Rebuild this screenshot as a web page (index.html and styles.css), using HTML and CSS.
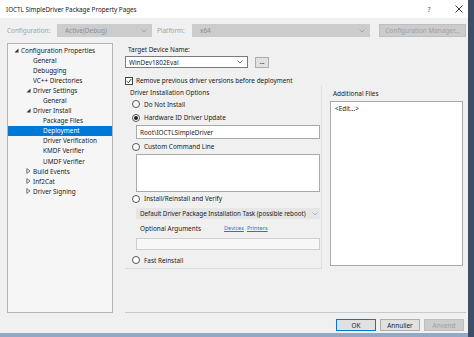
FILE: index.html
```html
<!DOCTYPE html>
<html>
<head>
<meta charset="utf-8">
<title>IOCTL SimpleDriver Package Property Pages</title>
<link rel="stylesheet" href="styles.css">
</head>
<body>
<div class="window">
  <div class="titlebar">
    <span class="title">IOCTL SimpleDriver Package Property Pages</span>
    <span class="help">?</span>
    <span class="close">
      <svg width="8" height="8" viewBox="0 0 8 8"><path d="M0.5 0.5 L7.5 7.5 M7.5 0.5 L0.5 7.5" stroke="#222" stroke-width="0.9"/></svg>
    </span>
  </div>

  <div class="config-row">
    <span class="lbl-off lbl-config">Configuration:</span>
    <div class="combo combo-off combo-config">
      <span class="combo-text">Active(Debug)</span>
      <svg class="chev" width="6" height="4" viewBox="0 0 6 4"><path d="M0.5 0.5 L3 3 L5.5 0.5" fill="none" stroke="#9a9a9a" stroke-width="0.8"/></svg>
    </div>
    <span class="lbl-off lbl-platform">Platform:</span>
    <div class="combo combo-off combo-platform">
      <span class="combo-text">x64</span>
      <svg class="chev" width="6" height="4" viewBox="0 0 6 4"><path d="M0.5 0.5 L3 3 L5.5 0.5" fill="none" stroke="#9a9a9a" stroke-width="0.8"/></svg>
    </div>
    <div class="btn btn-off btn-cfgmgr">Configuration Manager...</div>
  </div>

  <div class="main">
    <div class="tree">
      <div class="node lvl0"><span class="tw"><svg width="5" height="5" viewBox="0 0 5 5"><polygon points="4.5,0.5 4.5,4.5 0.5,4.5" fill="#333"/></svg></span>Configuration Properties</div>
      <div class="node lvl1"><span class="tw"></span>General</div>
      <div class="node lvl1"><span class="tw"></span>Debugging</div>
      <div class="node lvl1"><span class="tw"></span>VC++ Directories</div>
      <div class="node lvl1"><span class="tw"><svg width="5" height="5" viewBox="0 0 5 5"><polygon points="4.5,0.5 4.5,4.5 0.5,4.5" fill="#333"/></svg></span>Driver Settings</div>
      <div class="node lvl2"><span class="tw"></span>General</div>
      <div class="node lvl1"><span class="tw"><svg width="5" height="5" viewBox="0 0 5 5"><polygon points="4.5,0.5 4.5,4.5 0.5,4.5" fill="#333"/></svg></span>Driver Install</div>
      <div class="node lvl2"><span class="tw"></span>Package Files</div>
      <div class="node lvl2 selected"><span class="tw"></span>Deployment</div>
      <div class="node lvl2"><span class="tw"></span>Driver Verification</div>
      <div class="node lvl2"><span class="tw"></span>KMDF Verifier</div>
      <div class="node lvl2"><span class="tw"></span>UMDF Verifier</div>
      <div class="node lvl1"><span class="tw"><svg width="5" height="6" viewBox="0 0 5 6"><polygon points="0.8,0.6 4,3 0.8,5.4" fill="none" stroke="#555" stroke-width="0.8"/></svg></span>Build Events</div>
      <div class="node lvl1"><span class="tw"><svg width="5" height="6" viewBox="0 0 5 6"><polygon points="0.8,0.6 4,3 0.8,5.4" fill="none" stroke="#555" stroke-width="0.8"/></svg></span>Inf2Cat</div>
      <div class="node lvl1"><span class="tw"><svg width="5" height="6" viewBox="0 0 5 6"><polygon points="0.8,0.6 4,3 0.8,5.4" fill="none" stroke="#555" stroke-width="0.8"/></svg></span>Driver Signing</div>
    </div>

    <div class="page">
      <div class="field-label">Target Device Name:</div>
      <div class="device-row">
        <div class="combo combo-device">
          <span class="combo-text">WinDev1802Eval</span>
          <svg class="chev" width="6" height="4" viewBox="0 0 6 4"><path d="M0.5 0.5 L3 3 L5.5 0.5" fill="none" stroke="#555" stroke-width="0.8"/></svg>
        </div>
        <div class="btn btn-dots">...</div>
      </div>
      <div class="check-row">
        <span class="checkbox">
          <svg width="6" height="6" viewBox="0 0 6 6"><path d="M0.8 3.2 L2.4 4.8 L5.3 1" fill="none" stroke="#222" stroke-width="0.9"/></svg>
        </span>
        <span>Remove previous driver versions before deployment</span>
      </div>

      <div class="columns">
        <div class="options">
          <div class="group-title">Driver Installation Options</div>
          <div class="radio-row r1"><span class="radio"></span>Do Not Install</div>
          <div class="radio-row r2"><span class="radio on"></span>Hardware ID Driver Update</div>
          <div class="textbox tb-hwid">Root\IOCTLSimpleDriver</div>
          <div class="radio-row r3"><span class="radio"></span>Custom Command Line</div>
          <div class="textbox tb-cmd"></div>
          <div class="radio-row r4"><span class="radio"></span>Install/Reinstall and Verify</div>
          <div class="combo combo-flat">
            <span class="combo-text">Default Driver Package Installation Task (possible reboot)</span>
            <svg class="chev" width="6" height="4" viewBox="0 0 6 4"><path d="M0.5 0.5 L3 3 L5.5 0.5" fill="none" stroke="#aaa" stroke-width="0.8"/></svg>
          </div>
          <div class="args-row">
            <span class="args-label">Optional Arguments</span>
            <span class="link">Devices</span>
            <span class="link">Printers</span>
          </div>
          <div class="textbox tb-args"></div>
          <div class="radio-row r5"><span class="radio"></span>Fast Reinstall</div>
        </div>

        <div class="files">
          <div class="files-title">Additional Files</div>
          <div class="files-box">&lt;Edit...&gt;</div>
        </div>
      </div>
    </div>
  </div>

  <div class="footer">
    <div class="btn btn-default">OK</div>
    <div class="btn">Annuller</div>
    <div class="btn btn-off">Anvend</div>
  </div>
</div>
</body>
</html>
```

FILE: styles.css
```css
* {
  box-sizing: border-box;
}
html, body {
  margin: 0;
}
body {
  width: 474px;
  height: 337px;
  overflow: hidden;
  background: linear-gradient(to right, #93a8c4 468px, #3d4e68 468px);
  font: 6.4px "Noto Sans", "Open Sans", sans-serif;
  color: #1a1a1a;
}
.window {
  width: 468px;
  height: 333px;
  background: #f0f0f0;
  display: flex;
  flex-direction: column;
}

/* title bar */
.titlebar {
  height: 18px;
  background: #ffffff;
  display: flex;
  align-items: center;
  padding-left: 6px;
  font-size: 6.3px;
}
.title {
  flex: 1;
}
.help {
  width: 10px;
  text-align: center;
  margin-right: 21px;
  color: #333;
}
.close {
  width: 8px;
  height: 8px;
  display: flex;
  margin-right: 5px;
}

/* configuration row */
.config-row {
  display: flex;
  align-items: center;
  height: 13px;
  margin-top: 6px;
}
.lbl-off {
  color: #a2a2a2;
}
.lbl-config {
  margin-left: 7px;
  width: 50px;
}
.lbl-platform {
  margin-left: 5px;
  width: 35px;
}
.combo {
  display: flex;
  align-items: center;
  height: 13px;
  border: 1px solid #7a7a7a;
  background: #ffffff;
  padding: 0 4px;
}
.combo-text {
  flex: 1;
  white-space: nowrap;
  overflow: hidden;
}
.combo-off {
  background: #cccccc;
  border-color: #cccccc;
  color: #8d8d8d;
}
.combo-config {
  width: 95px;
  padding-left: 7px;
}
.combo-platform {
  width: 178px;
  padding-left: 7px;
}
.btn {
  display: flex;
  align-items: center;
  justify-content: center;
  height: 13px;
  border: 1px solid #adadad;
  background: #e1e1e1;
}
.btn-off {
  background: #cccccc;
  border-color: #bfbfbf;
  color: #a0a0a0;
}
.btn-cfgmgr {
  width: 87px;
  margin-left: 9px;
}

/* main area */
.main {
  display: flex;
  margin-top: 6px;
  height: 270px;
}
.tree {
  margin-left: 7px;
  width: 106px;
  height: 270px;
  border: 1px solid #b4b4b4;
  background: #f6f6f6;
  padding-top: 1px;
}
.node {
  display: flex;
  align-items: center;
  height: 10.1px;
  white-space: nowrap;
}
.tw {
  width: 7px;
  display: flex;
  align-items: center;
}
.lvl0 {
  padding-left: 6px;
}
.lvl1 {
  padding-left: 18px;
}
.lvl2 {
  padding-left: 28px;
}
.selected {
  background: #0078d7;
  color: #ffffff;
}

.page {
  margin-left: 12px;
  width: 341px;
  border-bottom: 1px solid #c9c9c9;
}
.field-label {
  height: 10px;
  line-height: 10px;
  margin-top: 2px;
  padding-left: 3px;
}
.device-row {
  display: flex;
  align-items: flex-end;
  margin-top: 1px;
}
.combo-device {
  width: 123px;
  height: 12px;
  padding-left: 3px;
}
.btn-dots {
  width: 14px;
  height: 11px;
  margin-left: 7px;
  padding-bottom: 2px;
}
.check-row {
  display: flex;
  align-items: center;
  height: 9px;
  margin-top: 8px;
}
.checkbox {
  width: 8px;
  height: 8px;
  border: 1px solid #444;
  background: #ffffff;
  display: flex;
  align-items: center;
  justify-content: center;
  margin-right: 3px;
}

.columns {
  display: flex;
}
.options {
  width: 197px;
  height: 184px;
  padding-left: 5px;
  border-right: 1px solid #e0e0e0;
  border-bottom: 1px solid #dadada;
}
.group-title {
  height: 10px;
  line-height: 10px;
  margin-top: 3px;
}
.radio-row {
  display: flex;
  align-items: center;
  height: 10px;
}
.radio {
  width: 8px;
  height: 8px;
  border: 1px solid #555;
  border-radius: 50%;
  background: #ffffff;
  margin-left: 2px;
  margin-right: 4px;
  display: flex;
  align-items: center;
  justify-content: center;
}
.radio.on::after {
  content: "";
  width: 4px;
  height: 4px;
  border-radius: 50%;
  background: #222;
}
.r1 {
  margin-top: 1px;
}
.r2 {
  margin-top: 3.5px;
}
.r3 {
  margin-top: 2.5px;
}
.r4 {
  margin-top: 1.5px;
}
.r5 {
  margin-top: 5px;
}
.textbox {
  margin-left: 6px;
  width: 184px;
  border: 1px solid #a9a9a9;
  background: #ffffff;
  padding-left: 3px;
  display: flex;
  align-items: center;
}
.tb-hwid {
  height: 14px;
  margin-top: 2.5px;
}
.tb-cmd {
  height: 38px;
  margin-top: 2.5px;
}
.tb-args {
  height: 12.5px;
  margin-top: 4.5px;
  background: #f7f7f7;
  border-color: #cfcfcf;
}
.combo-flat {
  margin-left: 6px;
  margin-top: 4.5px;
  width: 184px;
  height: 11px;
  padding: 0 1px 0 3px;
  background: #e6e6e6;
  border-color: #e6e6e6;
  color: #222;
  font-size: 6.3px;
  letter-spacing: -0.05px;
}
.args-row {
  display: flex;
  align-items: center;
  height: 10px;
  margin-top: 4px;
  padding-left: 10px;
}
.args-label {
  width: 84px;
}
.link {
  color: #3b6fc2;
  text-decoration: underline;
  font-size: 5.6px;
  margin-right: 3px;
}

.files {
  margin-left: 8px;
  width: 133px;
}
.files-title {
  height: 10px;
  line-height: 10px;
  margin-top: 4px;
  padding-left: 3px;
}
.files-box {
  margin-top: 2px;
  height: 165px;
  border: 1px solid #a9a9a9;
  background: #ffffff;
  padding: 2px 4px;
}

/* footer buttons */
.footer {
  display: flex;
  justify-content: flex-end;
  gap: 4px;
  margin-top: 6px;
  padding-right: 4px;
}
.footer .btn {
  width: 40px;
  height: 12px;
}
.btn-default {
  border: 1px solid #0078d7;
}
```
